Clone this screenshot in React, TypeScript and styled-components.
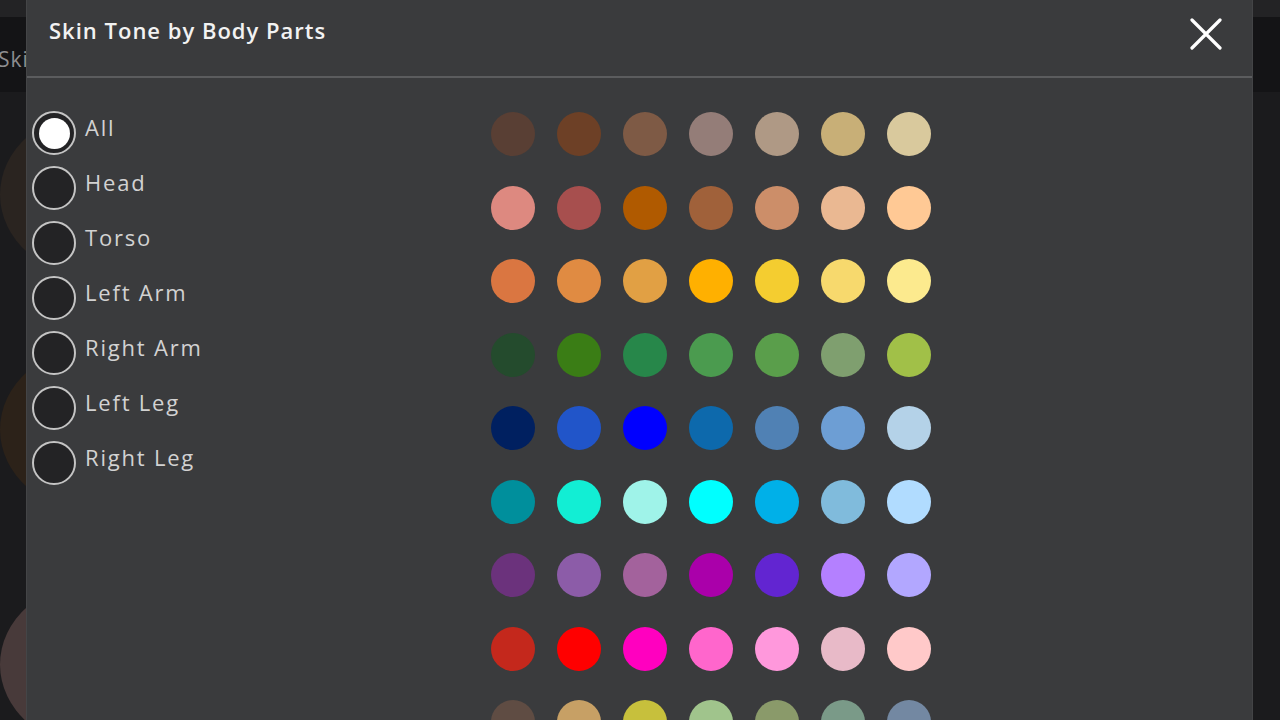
import styled, { createGlobalStyle } from "styled-components";

const GlobalStyle = createGlobalStyle`
  html, body {
    margin: 0;
    padding: 0;
    background: #161618;
    overflow: hidden;
  }
  * {
    box-sizing: border-box;
  }
`;

const parts = ["All", "Head", "Torso", "Left Arm", "Right Arm", "Left Leg", "Right Leg"];

const swatches = [
  ["#593f34", "#6d4026", "#7e5a45", "#947d78", "#af9985", "#c8af77", "#d9c99d"],
  ["#dd8980", "#a74f4e", "#b05a00", "#a0613a", "#cc8e69", "#eab892", "#ffc995"],
  ["#da7641", "#e08b42", "#e1a044", "#ffb000", "#f4cd30", "#f7d96d", "#fcea8e"],
  ["#244b2d", "#3a7d15", "#27874a", "#4b9b4f", "#5a9e4b", "#7f9f6f", "#a1c048"],
  ["#002060", "#2155c9", "#0000ff", "#0d69ac", "#5081b4", "#6d9ed4", "#b4d2e8"],
  ["#008f9c", "#12eed4", "#9ff3e9", "#00ffff", "#00b0e8", "#80bbdc", "#b1dcff"],
  ["#6b327c", "#8c5ca8", "#a3629c", "#aa00aa", "#6225d1", "#b480ff", "#b2a7ff"],
  ["#c4281c", "#ff0000", "#ff00bf", "#ff66cc", "#ff98dc", "#e8bac8", "#ffc9c9"],
  ["#5f4c43", "#c7a065", "#c7c03c", "#a0c48c", "#8a9a6a", "#7a9a88", "#7388a2"],
];

export default function App() {
  return (
    <>
      <GlobalStyle />
      <Page>
        <TopStrip />
        <BackHeader>
          <BackTitle>Skin Tone</BackTitle>
        </BackHeader>
        <BackContent>
          <BackCircle $color="#2a2420" />
          <BackCircle $color="#2c2219" />
          <BackCircle $color="#483a3a" />
        </BackContent>

        <Modal>
          <Header>
            <Title>Skin Tone by Body Parts</Title>
            <CloseButton aria-label="Close">
              <svg width="32" height="32" viewBox="0 0 32 32">
                <path
                  d="M2 2 L30 30 M30 2 L2 30"
                  stroke="#ffffff"
                  strokeWidth="3.2"
                  strokeLinecap="round"
                />
              </svg>
            </CloseButton>
          </Header>

          <Body>
            <PartList>
              {parts.map((p, i) => (
                <PartRow key={p}>
                  <Radio $checked={i === 0} />
                  <PartLabel>{p}</PartLabel>
                </PartRow>
              ))}
            </PartList>

            <Grid>
              {swatches.flat().map((c, i) => (
                <Swatch key={i} $color={c} />
              ))}
            </Grid>
          </Body>
        </Modal>
      </Page>
    </>
  );
}

const Page = styled.div`
  position: relative;
  width: 1280px;
  height: 720px;
  overflow: hidden;
  background: #1b1b1d;
  font-family: "Open Sans", "Liberation Sans", sans-serif;
`;

const TopStrip = styled.div`
  height: 17px;
  background: #232325;
`;

const BackHeader = styled.div`
  height: 75px;
  background: #141416;
  display: flex;
  align-items: center;
  padding-top: 8px;
`;

const BackTitle = styled.span`
  font-size: 21px;
  letter-spacing: 1px;
  color: #8e8e90;
  margin-left: -2px;
`;

const BackContent = styled.div`
  display: flex;
  flex-direction: column;
  gap: 70px;
  padding-top: 20px;
  margin-left: 0;
`;

const BackCircle = styled.div<{ $color: string }>`
  width: 190px;
  height: 165px;
  border-radius: 50%;
  background: ${(p) => p.$color};
`;

const Modal = styled.div`
  position: absolute;
  left: 26px;
  top: 0;
  width: 1227px;
  height: 720px;
  background: #3a3b3d;
  border-left: 1px solid #444547;
  border-right: 1px solid #434446;
`;

const Header = styled.div`
  height: 78px;
  display: flex;
  align-items: center;
  justify-content: space-between;
  padding: 0 30px 16px 22px;
  border-bottom: 2px solid #5b5c5e;
`;

const Title = styled.h1`
  margin: 0;
  font-size: 22px;
  font-weight: 600;
  color: #f2f2f2;
  letter-spacing: 1px;
`;

const CloseButton = styled.button`
  border: none;
  background: none;
  padding: 0;
  width: 32px;
  height: 32px;
  display: flex;
  margin-top: 8px;
`;

const Body = styled.div`
  display: flex;
  padding: 33px 0 0 5px;
`;

const PartList = styled.div`
  width: 459px;
  display: flex;
  flex-direction: column;
`;

const PartRow = styled.div`
  height: 55px;
  display: flex;
  align-items: flex-start;
`;

const Radio = styled.div<{ $checked: boolean }>`
  width: 44px;
  height: 44px;
  border-radius: 50%;
  border: 2px solid #c4c4c4;
  background: #232325;
  display: flex;
  align-items: center;
  justify-content: center;
  flex-shrink: 0;

  &::after {
    content: "";
    width: 31px;
    height: 31px;
    border-radius: 50%;
    background: #ffffff;
    display: ${(p) => (p.$checked ? "block" : "none")};
  }
`;

const PartLabel = styled.span`
  margin-left: 9px;
  margin-top: 1px;
  font-size: 22px;
  letter-spacing: 1.8px;
  color: #d2d2d2;
  line-height: 30px;
`;

const Grid = styled.div`
  display: grid;
  grid-template-columns: repeat(7, 44px);
  column-gap: 22px;
  row-gap: 29.5px;
  padding-top: 1px;
`;

const Swatch = styled.div<{ $color: string }>`
  width: 44px;
  height: 44px;
  border-radius: 50%;
  background: ${(p) => p.$color};
`;
